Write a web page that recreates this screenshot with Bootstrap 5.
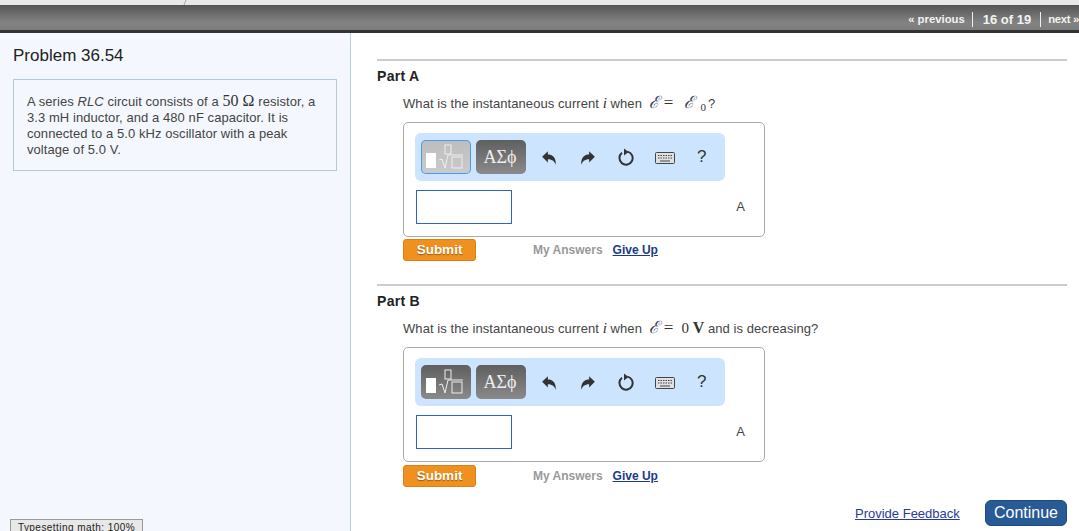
<!DOCTYPE html>
<html lang="en"><head><meta charset="utf-8"><title>Problem 36.54</title>
<link href="https://cdn.jsdelivr.net/npm/bootstrap@5.3.0/dist/css/bootstrap.min.css" rel="stylesheet">
<style>
html,body{height:531px;overflow:hidden;background:#fff}
body{font-family:"Liberation Sans",Arial,sans-serif;font-size:13px;color:#444;width:1079px}
.chrome-strip{height:6px;background:#e9e9e9;border-bottom:1px solid #555;position:relative}
.chrome-strip svg{display:block}
.top-bar{height:27px;background:linear-gradient(#585858,#838383 70%,#7c7c7c);border-bottom:3px solid #333;color:#f2f2f2;font-weight:700;font-size:11.3px;padding-top:2px;overflow:hidden}
.top-bar .pg{font-size:13px;padding:0 9px 0 10px;border-left:1px solid #eee;margin-left:7px;line-height:15px}
.top-bar .nx{padding-left:7px;border-left:1px solid #eee;line-height:15px;white-space:nowrap;letter-spacing:-.3px}
.main-wrap{height:498px}
.side-col{width:351px;background:#f4f8fe;border-right:1px solid #b9cde0;padding:13px 13px 0;position:relative;flex:none}
.prob-title{font-size:17px;color:#222;font-weight:400;margin:0 0 13px;line-height:20px}
.prob-box{border:1px solid #b5c9de;padding:13px;line-height:16px;font-size:13px;height:92px;width:324px;color:#444;letter-spacing:.07px}
.mth{font-family:"Liberation Serif",serif;font-size:15px;color:#333;line-height:1}
.mth-b{font-family:"Liberation Serif",serif;font-size:16px;color:#333;font-weight:700;line-height:1}
.scr{font-family:"DejaVu Serif",serif;font-style:italic;font-size:17px;line-height:1;color:#3a3a5a;margin:0 1px 0 3px}
.eq-sign{margin:0 8px 0 4px;font-size:17px;line-height:1}
.sub-0{font-family:"Liberation Serif",serif;font-size:11px;color:#333;position:relative;top:3px;margin:0 2px 0 5px;line-height:1}
.type-box{position:absolute;left:10px;bottom:-4px;width:133px;height:16px;background:#e8e8e8;border:1px solid #999;font-size:10px;color:#222;text-align:center;line-height:15px;letter-spacing:.45px}
.cont-col{padding:0 12px 0 26px;flex:1;min-width:0;position:relative}
.part-sec{border-top:2px solid #ccc;padding-top:7px;height:225px}
.part-sec.first{margin-top:26px}
.part-name{font-size:14px;font-weight:700;color:#222;line-height:17px;letter-spacing:.3px}
.part-q{margin:8px 0 0 26px;padding-top:1px;font-size:13px;line-height:20px;height:20px;white-space:nowrap;letter-spacing:.07px}
.ans-box{margin:9px 0 0 26px;width:362px;height:115px;border:1px solid #aaa;border-radius:5px;padding:10px 11px}
.tool-bar{width:310px;height:48px;background:#cde4ff;border-radius:6px;padding:6px;gap:5px}
.tb-b{flex:none;width:50px;height:34px;border-radius:5px;background:linear-gradient(#5f5f5f,#8a8a8a);color:#eee;font-family:"Liberation Serif",serif;font-size:18px;line-height:1;padding:0 2px 0 0;border:0}
.tb-b.act{background:linear-gradient(#bdbdbd,#cbcbcb);box-shadow:inset 0 0 0 1px #4a9bf0}
.tb-i{width:38.6px;text-align:center;color:#333;font-size:17px;flex:none;line-height:1}
.tb-i svg{display:inline-block;vertical-align:middle}
.tb-q{margin-left:-2px}
.tb-row{margin-left:-1px}
.inp-row{margin-top:9px;padding-right:8px}
.inp-bx{width:96px;height:34px;border:1px solid #2a66c9;margin-left:1px;background:#fff}
.unit{font-size:13px;color:#444}
.act-row{margin:2px 0 0 26px;height:22px}
.act-row.lower{margin-top:3px}
.sub-b{width:73px;height:22px;background:#f0901e;border:1px solid #d9801a;border-radius:3px;color:#fff;font-weight:700;font-size:13.5px;line-height:17px;padding:0 0 2px;text-shadow:0 1px 1px #9a5a10}
.my-a{margin-left:57px;color:#999;font-weight:700;font-size:12px}
.give{margin-left:10px;color:#1a3a8a;font-weight:700;font-size:12px}
.foot-link{position:absolute;left:504px;top:473px;font-size:13px;color:#2a3a9a;line-height:16px}
.cont-b{position:absolute;left:634px;top:467px;width:82px;height:26px;background:#285a96;border:1px solid #1f4a80;border-radius:6px;color:#fff;font-size:16px;line-height:22px;padding:0}
</style></head>
<body>
<div class="chrome-strip"><svg width="200" height="5"><path d="M186 0 L184 5" stroke="#aaa"/></svg></div>
<div class="top-bar d-flex justify-content-end align-items-center">
  <span>« previous</span><span class="pg">16 of 19</span><span class="nx">next »</span>
</div>
<div class="main-wrap d-flex">
  <aside class="side-col">
    <h2 class="prob-title">Problem 36.54</h2>
    <div class="prob-box">A series <em>RLC</em> circuit consists of a <span class="mth-b fw-normal">50 Ω</span> resistor, a 3.3 mH inductor, and a 480 nF capacitor. It is connected to a 5.0 kHz oscillator with a peak voltage of 5.0 V.</div>
    <div class="type-box">Typesetting math: 100%</div>
  </aside>
  <main class="cont-col">
    <section class="part-sec first">
      <div class="part-name">Part A</div>
      <p class="part-q">What is the instantaneous current <span class="mth fst-italic">i</span> when <span class="scr">ℰ</span><span class="mth eq-sign">=</span><span class="scr">ℰ</span><span class="sub-0">0</span>?</p>
      <div class="ans-box">
        <div class="tool-bar d-flex align-items-center">
          <button class="tb-b act btn d-flex align-items-center justify-content-center" type="button" aria-label="templates"><svg width="44" height="28" viewBox="0 0 44 28"><rect x="3" y="10" width="10" height="15" fill="#fff"/><rect x="22" y="2" width="6" height="9" fill="none" stroke="#eee"/><path d="M16 17l3-1 3 9 3-13h15" fill="none" stroke="#eee"/><rect x="29" y="14" width="10" height="11" fill="none" stroke="#eee"/></svg></button>
          <button class="tb-b btn" type="button">ΑΣϕ</button>
          <div class="tb-row d-flex align-items-center">
            <span class="tb-i"><svg width="16" height="16" viewBox="0 0 14 14"><path d="M1 6L6 1v3c4 0 7 2 7 9-1-3-3-5-7-5v3z" fill="#333"/></svg></span>
            <span class="tb-i"><svg width="16" height="16" viewBox="0 0 14 14"><path d="M13 6L8 1v3C4 4 1 6 1 13c1-3 3-5 7-5v3z" fill="#333"/></svg></span>
            <span class="tb-i"><svg width="18" height="18" viewBox="0 0 18 18"><path d="M10.5 3.6A6.6 6.6 0 1 1 5 4.8" fill="none" stroke="#333" stroke-width="2"/><path d="M7 0.5v7l4.5-3.5z" fill="#333"/></svg></span>
            <span class="tb-i"><svg width="20" height="12" viewBox="0 0 20 12"><rect x=".5" y=".5" width="19" height="11" rx="1" fill="#e0e0e0" stroke="#444"/><path d="M3 3.5h14M3 6h14" stroke="#444" stroke-dasharray="1.5 1"/><path d="M5 9h10" stroke="#444"/></svg></span>
            <span class="tb-i tb-q">?</span>
          </div>
        </div>
        <div class="inp-row d-flex justify-content-between align-items-center"><div class="inp-bx"></div><span class="unit">A</span></div>
      </div>
      <div class="act-row d-flex align-items-center"><button class="sub-b btn" type="button">Submit</button><span class="my-a">My Answers</span><a class="give" href="#">Give Up</a></div>
    </section>
    <section class="part-sec">
      <div class="part-name">Part B</div>
      <p class="part-q">What is the instantaneous current <span class="mth fst-italic">i</span> when <span class="scr">ℰ</span><span class="mth eq-sign">=</span><span class="mth">0</span> <span class="mth-b">V</span> and is decreasing?</p>
      <div class="ans-box">
        <div class="tool-bar d-flex align-items-center">
          <button class="tb-b btn d-flex align-items-center justify-content-center" type="button" aria-label="templates"><svg width="44" height="28" viewBox="0 0 44 28"><rect x="3" y="10" width="10" height="15" fill="#fff"/><rect x="22" y="2" width="6" height="9" fill="none" stroke="#eee"/><path d="M16 17l3-1 3 9 3-13h15" fill="none" stroke="#eee"/><rect x="29" y="14" width="10" height="11" fill="none" stroke="#eee"/></svg></button>
          <button class="tb-b btn" type="button">ΑΣϕ</button>
          <div class="tb-row d-flex align-items-center">
            <span class="tb-i"><svg width="16" height="16" viewBox="0 0 14 14"><path d="M1 6L6 1v3c4 0 7 2 7 9-1-3-3-5-7-5v3z" fill="#333"/></svg></span>
            <span class="tb-i"><svg width="16" height="16" viewBox="0 0 14 14"><path d="M13 6L8 1v3C4 4 1 6 1 13c1-3 3-5 7-5v3z" fill="#333"/></svg></span>
            <span class="tb-i"><svg width="18" height="18" viewBox="0 0 18 18"><path d="M10.5 3.6A6.6 6.6 0 1 1 5 4.8" fill="none" stroke="#333" stroke-width="2"/><path d="M7 0.5v7l4.5-3.5z" fill="#333"/></svg></span>
            <span class="tb-i"><svg width="20" height="12" viewBox="0 0 20 12"><rect x=".5" y=".5" width="19" height="11" rx="1" fill="#e0e0e0" stroke="#444"/><path d="M3 3.5h14M3 6h14" stroke="#444" stroke-dasharray="1.5 1"/><path d="M5 9h10" stroke="#444"/></svg></span>
            <span class="tb-i tb-q">?</span>
          </div>
        </div>
        <div class="inp-row d-flex justify-content-between align-items-center"><div class="inp-bx"></div><span class="unit">A</span></div>
      </div>
      <div class="act-row lower d-flex align-items-center"><button class="sub-b btn" type="button">Submit</button><span class="my-a">My Answers</span><a class="give" href="#">Give Up</a></div>
    </section>
    <a class="foot-link" href="#">Provide Feedback</a>
    <button class="cont-b btn" type="button">Continue</button>
  </main>
</div>
</body></html>
